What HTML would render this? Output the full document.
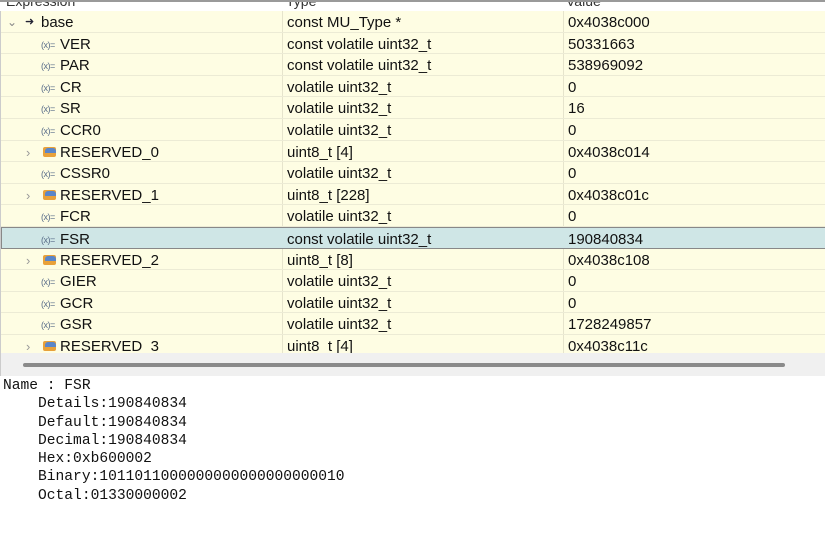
<!DOCTYPE html>
<html><head><meta charset="utf-8"><style>
*{margin:0;padding:0;box-sizing:border-box}
body{width:825px;height:555px;overflow:hidden;background:#fff;font-family:"Liberation Sans",sans-serif;position:relative}
.hdr{position:absolute;left:0;top:0;width:825px;height:11px;background:#fff;border-top:2px solid #9a9a9a;overflow:hidden}
.hdr span{position:absolute;top:-9px;font-size:14px;color:#333}
.tbl{position:absolute;left:0;top:11px;width:825px;height:342px;background:#fefde3;overflow:hidden;border-left:1px solid #ccc}
.row{position:absolute;left:0;width:825px;height:21.6px;border-bottom:1px solid #ecebd5;font-size:15px;color:#111;line-height:23px}
.row.sel{background:#cfe6e6;border:1px solid #888;border-right:none}
.c{position:absolute;top:0;white-space:pre}
.vl{position:absolute;top:0;width:1px;height:342px;background:#e6e4cc}
.vi{position:absolute;top:1px;left:40px;font-size:9px;color:#5a6e8a;letter-spacing:-0.5px}
.ch{position:absolute;top:0;left:25px;color:#999;font-size:13px}
.fo{position:absolute;top:6px;left:42px;width:13px;height:10px;background:#e8a13a;border-radius:2px}
.fo:after{content:"";position:absolute;left:2px;top:1px;width:11px;height:5px;background:#5b86c8;border-radius:3px 3px 0 0}
.sb{position:absolute;left:0;top:353px;width:825px;height:23px;background:#f0f0f0;border-left:1px solid #ccc}
.th{position:absolute;left:22px;top:10px;width:762px;height:4px;background:#8a8a8a;border-radius:2px}
.det{position:absolute;left:3px;top:377px;font-family:"Liberation Mono",monospace;font-size:14.6px;line-height:18.3px;color:#111;white-space:pre}
</style></head><body>
<div class="hdr"><span style="left:6px">Expression</span><span style="left:286px">Type</span><span style="left:566px">Value</span></div>
<div class="tbl">
<div class="vl" style="left:281px"></div><div class="vl" style="left:562px"></div>
<div class="row" style="top:0"><span class="c" style="left:6px;color:#888;font-size:12px">⌄</span><span class="c" style="left:24px;color:#223;font-size:11px">➜</span><span class="c" style="left:40px">base</span><span class="c" style="left:286px">const MU_Type *</span><span class="c" style="left:567px">0x4038c000</span></div>
<div class="row" style="top:21.6px"><span class="vi">(x)=</span><span class="c" style="left:59px">VER</span><span class="c" style="left:286px">const volatile uint32_t</span><span class="c" style="left:567px">50331663</span></div>
<div class="row" style="top:43.2px"><span class="vi">(x)=</span><span class="c" style="left:59px">PAR</span><span class="c" style="left:286px">const volatile uint32_t</span><span class="c" style="left:567px">538969092</span></div>
<div class="row" style="top:64.8px"><span class="vi">(x)=</span><span class="c" style="left:59px">CR</span><span class="c" style="left:286px">volatile uint32_t</span><span class="c" style="left:567px">0</span></div>
<div class="row" style="top:86.4px"><span class="vi">(x)=</span><span class="c" style="left:59px">SR</span><span class="c" style="left:286px">volatile uint32_t</span><span class="c" style="left:567px">16</span></div>
<div class="row" style="top:108px"><span class="vi">(x)=</span><span class="c" style="left:59px">CCR0</span><span class="c" style="left:286px">volatile uint32_t</span><span class="c" style="left:567px">0</span></div>
<div class="row" style="top:129.6px"><span class="ch">›</span><span class="fo"></span><span class="c" style="left:59px">RESERVED_0</span><span class="c" style="left:286px">uint8_t [4]</span><span class="c" style="left:567px">0x4038c014</span></div>
<div class="row" style="top:151.2px"><span class="vi">(x)=</span><span class="c" style="left:59px">CSSR0</span><span class="c" style="left:286px">volatile uint32_t</span><span class="c" style="left:567px">0</span></div>
<div class="row" style="top:172.8px"><span class="ch">›</span><span class="fo"></span><span class="c" style="left:59px">RESERVED_1</span><span class="c" style="left:286px">uint8_t [228]</span><span class="c" style="left:567px">0x4038c01c</span></div>
<div class="row" style="top:194.4px"><span class="vi">(x)=</span><span class="c" style="left:59px">FCR</span><span class="c" style="left:286px">volatile uint32_t</span><span class="c" style="left:567px">0</span></div>
<div class="row sel" style="top:216px"><span class="vi" style="left:39px">(x)=</span><span class="c" style="left:58px">FSR</span><span class="c" style="left:285px">const volatile uint32_t</span><span class="c" style="left:566px">190840834</span></div>
<div class="row" style="top:237.6px"><span class="ch">›</span><span class="fo"></span><span class="c" style="left:59px">RESERVED_2</span><span class="c" style="left:286px">uint8_t [8]</span><span class="c" style="left:567px">0x4038c108</span></div>
<div class="row" style="top:259.2px"><span class="vi">(x)=</span><span class="c" style="left:59px">GIER</span><span class="c" style="left:286px">volatile uint32_t</span><span class="c" style="left:567px">0</span></div>
<div class="row" style="top:280.8px"><span class="vi">(x)=</span><span class="c" style="left:59px">GCR</span><span class="c" style="left:286px">volatile uint32_t</span><span class="c" style="left:567px">0</span></div>
<div class="row" style="top:302.4px"><span class="vi">(x)=</span><span class="c" style="left:59px">GSR</span><span class="c" style="left:286px">volatile uint32_t</span><span class="c" style="left:567px">1728249857</span></div>
<div class="row" style="top:324px"><span class="ch">›</span><span class="fo"></span><span class="c" style="left:59px">RESERVED_3</span><span class="c" style="left:286px">uint8_t [4]</span><span class="c" style="left:567px">0x4038c11c</span></div>
</div>
<div class="sb"><div class="th"></div></div>
<div class="det">Name : FSR
    Details:190840834
    Default:190840834
    Decimal:190840834
    Hex:0xb600002
    Binary:1011011000000000000000000010
    Octal:01330000002</div>
</body></html>
